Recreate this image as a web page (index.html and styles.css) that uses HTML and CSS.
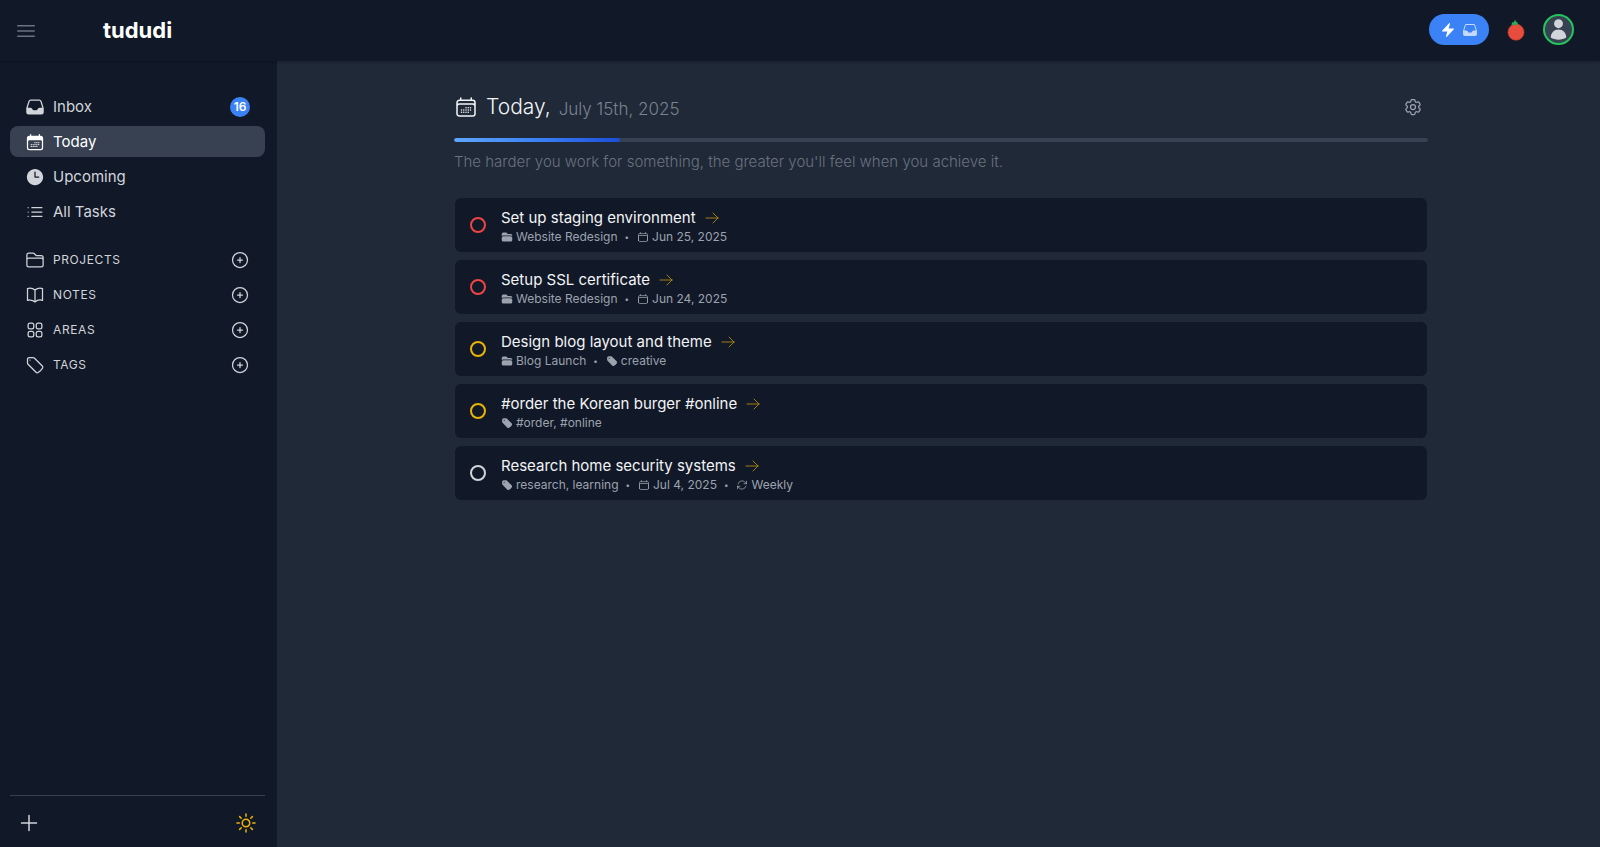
FILE: index.html
```html
<!DOCTYPE html>
<html lang="en">
<head>
    <meta charset="UTF-8">
    <meta name="viewport" content="width=device-width, initial-scale=1.0">
    <title>tududi</title>
    <link rel="stylesheet" href="styles.css">
</head>
<body>
    <!-- icon set -->
    <svg class="sprite" aria-hidden="true">
        <symbol id="i-menu" viewBox="0 0 24 24"><path d="M3.75 6.75h16.5M3.75 12h16.5m-16.5 5.25h16.5"/></symbol>
        <symbol id="i-inbox" viewBox="0 0 24 24"><path fill-rule="evenodd" d="M6.912 3a3 3 0 0 0-2.868 2.118l-2.411 7.838a3 3 0 0 0-.133.882V18a3 3 0 0 0 3 3h15a3 3 0 0 0 3-3v-4.162c0-.299-.045-.596-.133-.882l-2.412-7.838A3 3 0 0 0 17.088 3H6.912Zm13.823 9.75-2.213-7.191A1.5 1.5 0 0 0 17.088 4.5H6.912a1.5 1.5 0 0 0-1.434 1.059L3.265 12.75H6.11a3 3 0 0 1 2.684 1.658l.256.513a1.5 1.5 0 0 0 1.342.829h3.218a1.5 1.5 0 0 0 1.342-.83l.256-.512a3 3 0 0 1 2.684-1.658h2.844Z"/></symbol>
        <symbol id="i-calendar-solid" viewBox="0 0 24 24"><path d="M12.75 12.75a.75.75 0 1 1-1.5 0 .75.75 0 0 1 1.5 0ZM7.5 15.75a.75.75 0 1 0 0-1.5.75.75 0 0 0 0 1.5ZM8.25 17.25a.75.75 0 1 1-1.5 0 .75.75 0 0 1 1.5 0ZM9.75 15.75a.75.75 0 1 0 0-1.5.75.75 0 0 0 0 1.5ZM10.5 17.25a.75.75 0 1 1-1.5 0 .75.75 0 0 1 1.5 0ZM12 15.75a.75.75 0 1 0 0-1.5.75.75 0 0 0 0 1.5ZM12.75 17.25a.75.75 0 1 1-1.5 0 .75.75 0 0 1 1.5 0ZM14.25 15.75a.75.75 0 1 0 0-1.5.75.75 0 0 0 0 1.5ZM15 17.25a.75.75 0 1 1-1.5 0 .75.75 0 0 1 1.5 0ZM16.5 15.75a.75.75 0 1 0 0-1.5.75.75 0 0 0 0 1.5ZM15 12.75a.75.75 0 1 1-1.5 0 .75.75 0 0 1 1.5 0ZM16.5 13.5a.75.75 0 1 0 0-1.5.75.75 0 0 0 0 1.5Z"/><path fill-rule="evenodd" d="M6.75 2.25A.75.75 0 0 1 7.5 3v1.5h9V3A.75.75 0 0 1 18 3v1.5h.75a3 3 0 0 1 3 3v11.25a3 3 0 0 1-3 3H5.25a3 3 0 0 1-3-3V7.5a3 3 0 0 1 3-3H6V3a.75.75 0 0 1 .75-.75Zm13.5 9a1.5 1.5 0 0 0-1.5-1.5H5.25a1.5 1.5 0 0 0-1.5 1.5v7.5a1.5 1.5 0 0 0 1.5 1.5h13.5a1.5 1.5 0 0 0 1.5-1.5v-7.5Z"/></symbol>
        <symbol id="i-calendar-days" viewBox="0 0 24 24"><path d="M6.75 3v2.25M17.25 3v2.25M3 18.75V7.5a2.25 2.25 0 0 1 2.25-2.25h13.5A2.25 2.25 0 0 1 21 7.5v11.25m-18 0A2.25 2.25 0 0 0 5.25 21h13.5A2.25 2.25 0 0 0 21 18.75m-18 0v-7.5A2.25 2.25 0 0 1 5.25 9h13.5A2.25 2.25 0 0 1 21 11.25v7.5m-9-6h.008v.008H12v-.008ZM12 15h.008v.008H12V15Zm0 2.25h.008v.008H12v-.008ZM9.75 15h.008v.008H9.75V15Zm0 2.25h.008v.008H9.75v-.008ZM7.5 15h.008v.008H7.5V15Zm0 2.25h.008v.008H7.5v-.008Zm6.75-4.5h.008v.008h-.008v-.008Zm0 2.25h.008v.008h-.008V15Zm0 2.25h.008v.008h-.008v-.008Zm2.25-4.5h.008v.008H16.5v-.008Zm0 2.25h.008v.008H16.5V15Z"/></symbol>
        <symbol id="i-calendar" viewBox="0 0 24 24"><path d="M6.75 3v2.25M17.25 3v2.25M3 18.75V7.5a2.25 2.25 0 0 1 2.25-2.25h13.5A2.25 2.25 0 0 1 21 7.5v11.25m-18 0A2.25 2.25 0 0 0 5.25 21h13.5A2.25 2.25 0 0 0 21 18.75m-18 0v-7.5A2.25 2.25 0 0 1 5.25 9h13.5A2.25 2.25 0 0 1 21 11.25v7.5"/></symbol>
        <symbol id="i-clock" viewBox="0 0 24 24"><path fill-rule="evenodd" d="M12 2.25c-5.385 0-9.75 4.365-9.75 9.75s4.365 9.75 9.75 9.75 9.75-4.365 9.75-9.75S17.385 2.25 12 2.25ZM12.75 6a.75.75 0 0 0-1.5 0v6c0 .414.336.75.75.75h4.5a.75.75 0 0 0 0-1.5h-3.75V6Z"/></symbol>
        <symbol id="i-list" viewBox="0 0 24 24"><path d="M8.25 6.75h12M8.25 12h12m-12 5.25h12M3.75 6.75h.007v.008H3.75V6.75Zm0 5.25h.007v.008H3.75V12Zm0 5.25h.007v.008H3.75v-.008Z"/></symbol>
        <symbol id="i-folder" viewBox="0 0 24 24"><path d="M2.25 12.75V12A2.25 2.25 0 0 1 4.5 9.75h15A2.25 2.25 0 0 1 21.75 12v.75m-8.69-6.44-2.12-2.12a1.5 1.5 0 0 0-1.061-.44H4.5A2.25 2.25 0 0 0 2.25 6v12a2.25 2.25 0 0 0 2.25 2.25h15A2.25 2.25 0 0 0 21.75 18V9a2.25 2.25 0 0 0-2.25-2.25h-5.379a1.5 1.5 0 0 1-1.06-.44Z"/></symbol>
        <symbol id="i-folder-solid" viewBox="0 0 24 24"><path d="M19.5 21a3 3 0 0 0 3-3v-4.5a3 3 0 0 0-3-3h-15a3 3 0 0 0-3 3V18a3 3 0 0 0 3 3h15ZM1.5 10.146V6a3 3 0 0 1 3-3h5.379a2.25 2.25 0 0 1 1.59.659l2.122 2.121c.14.141.331.22.53.22H19.5a3 3 0 0 1 3 3v1.146A4.483 4.483 0 0 0 19.5 9h-15a4.483 4.483 0 0 0-3 1.146Z"/></symbol>
        <symbol id="i-book" viewBox="0 0 24 24"><path d="M12 6.042A8.967 8.967 0 0 0 6 3.75c-1.052 0-2.062.18-3 .512v14.25A8.987 8.987 0 0 1 6 18c2.305 0 4.408.867 6 2.292m0-14.25a8.966 8.966 0 0 1 6-2.292c1.052 0 2.062.18 3 .512v14.25A8.987 8.987 0 0 0 18 18a8.967 8.967 0 0 0-6 2.292m0-14.25v14.25"/></symbol>
        <symbol id="i-squares" viewBox="0 0 24 24"><rect x="3.75" y="3.75" width="6.75" height="6.75" rx="2.25"/><rect x="13.5" y="3.75" width="6.75" height="6.75" rx="2.25"/><rect x="3.75" y="13.5" width="6.75" height="6.75" rx="2.25"/><rect x="13.5" y="13.5" width="6.75" height="6.75" rx="2.25"/></symbol>
        <symbol id="i-tag" viewBox="0 0 24 24"><path d="M9.568 3H5.25A2.25 2.25 0 0 0 3 5.25v4.318c0 .597.237 1.17.659 1.591l9.581 9.581c.699.699 1.78.872 2.607.33a18.095 18.095 0 0 0 5.223-5.223c.542-.827.369-1.908-.33-2.607L11.16 3.66A2.25 2.25 0 0 0 9.568 3ZM6 6h.008v.008H6V6Z"/></symbol>
        <symbol id="i-tag-solid" viewBox="0 0 24 24"><path fill-rule="evenodd" d="M5.25 2.25a3 3 0 0 0-3 3v4.318a3 3 0 0 0 .879 2.121l9.58 9.581c.92.92 2.39 1.186 3.548.428a18.849 18.849 0 0 0 5.441-5.44c.758-1.16.492-2.629-.428-3.548l-9.58-9.581a3 3 0 0 0-2.122-.879H5.25ZM6.375 7.5a1.125 1.125 0 1 0 0-2.25 1.125 1.125 0 0 0 0 2.25Z"/></symbol>
        <symbol id="i-plus-circle" viewBox="0 0 24 24"><path d="M12 9v6m3-3H9m12 0a9 9 0 1 1-18 0 9 9 0 0 1 18 0Z"/></symbol>
        <symbol id="i-plus" viewBox="0 0 24 24"><path d="M12 4.5v15m7.5-7.5h-15"/></symbol>
        <symbol id="i-sun" viewBox="0 0 24 24"><path d="M12 3v2.25m6.364.386-1.591 1.591M21 12h-2.25m-.386 6.364-1.591-1.591M12 18.75V21m-4.773-4.227-1.591 1.591M5.25 12H3m4.227-4.773L5.636 5.636M15.75 12a3.75 3.75 0 1 1-7.5 0 3.75 3.75 0 0 1 7.5 0Z"/></symbol>
        <symbol id="i-bolt" viewBox="0 0 24 24"><path d="M14.615 1.595a.75.75 0 0 1 .359.852L12.982 9.75h7.268a.75.75 0 0 1 .548 1.262l-10.5 11.25a.75.75 0 0 1-1.272-.71l1.992-7.302H3.75a.75.75 0 0 1-.548-1.262l10.5-11.25a.75.75 0 0 1 .913-.143Z"/></symbol>
        <symbol id="i-cog" viewBox="0 0 24 24"><path d="M9.594 3.94c.09-.542.56-.94 1.11-.94h2.593c.55 0 1.02.398 1.11.94l.213 1.281c.063.374.313.686.645.87.074.04.147.083.22.127.325.196.72.257 1.075.124l1.217-.456a1.125 1.125 0 0 1 1.37.49l1.296 2.247a1.125 1.125 0 0 1-.26 1.431l-1.003.827c-.293.241-.438.613-.43.992a7.723 7.723 0 0 1 0 .255c-.008.378.137.75.43.991l1.004.827c.424.35.534.955.26 1.43l-1.298 2.247a1.125 1.125 0 0 1-1.369.491l-1.217-.456c-.355-.133-.75-.072-1.076.124a6.47 6.47 0 0 1-.22.128c-.331.183-.581.495-.644.869l-.213 1.281c-.09.543-.56.94-1.11.94h-2.594c-.55 0-1.019-.398-1.11-.94l-.213-1.281c-.062-.374-.312-.686-.644-.87a6.52 6.52 0 0 1-.22-.127c-.325-.196-.72-.257-1.076-.124l-1.217.456a1.125 1.125 0 0 1-1.369-.49l-1.297-2.247a1.125 1.125 0 0 1 .26-1.431l1.004-.827c.292-.24.437-.613.43-.991a6.932 6.932 0 0 1 0-.255c.007-.38-.138-.751-.43-.992l-1.004-.827a1.125 1.125 0 0 1-.26-1.43l1.297-2.247a1.125 1.125 0 0 1 1.37-.491l1.216.456c.356.133.751.072 1.076-.124.072-.044.146-.086.22-.128.332-.183.582-.495.644-.869l.214-1.28Z"/><circle cx="12" cy="12" r="3"/></symbol>
        <symbol id="i-arrow" viewBox="0 0 24 24"><path d="M13.5 4.5 21 12m0 0-7.5 7.5M21 12H3"/></symbol>
        <symbol id="i-repeat" viewBox="0 0 24 24"><path d="M16.023 9.348h4.992v-.001M2.985 19.644v-4.992m0 0h4.992m-4.993 0 3.181 3.183a8.25 8.25 0 0 0 13.803-3.7M4.031 9.865a8.25 8.25 0 0 1 13.803-3.7l3.181 3.182m0-4.991v4.99"/></symbol>
    </svg>

    <header class="topbar">
        <button class="icon-btn menu-btn" aria-label="Collapse sidebar"><svg class="line lg"><use href="#i-menu"/></svg></button>
        <a class="logo" href="#">tududi</a>
        <div class="topbar-actions">
            <button class="quick-btn" aria-label="Quick capture">
                <svg class="solid sm"><use href="#i-bolt"/></svg>
                <svg class="solid sm faded"><use href="#i-inbox"/></svg>
            </button>
            <button class="icon-btn" aria-label="Pomodoro timer">
                <svg class="tomato" viewBox="0 0 20 22">
                    <circle cx="10" cy="13" r="7.4" fill="#e74c3c" stroke="#c0392b" stroke-width="0.6"/>
                    <path fill="#27ae60" d="M5.8 6.8 6.400 3.800 8 4.200 9 1.600 10.400 3.600 11.600 4.200 11.400 7 9.800 5.800 8.800 7 7.600 6Z"/>
                </svg>
            </button>
            <button class="avatar" aria-label="Profile">
                <svg viewBox="0 0 28 28"><circle cx="14" cy="8" r="4.6"/><path d="M6 22.400C6 17.400 9.400 14 14 14s8 3.400 8 8.400C19.800 23.900 17 24.600 14 24.600S8.200 23.900 6 22.400Z"/></svg>
            </button>
        </div>
    </header>

    <div class="layout">
        <aside class="sidebar">
            <nav class="menu">
                <a class="menu-item" href="#"><svg class="solid"><use href="#i-inbox"/></svg>Inbox<span class="badge">16</span></a>
                <a class="menu-item active" href="#"><svg class="solid"><use href="#i-calendar-solid"/></svg>Today</a>
                <a class="menu-item" href="#"><svg class="solid"><use href="#i-clock"/></svg>Upcoming</a>
                <a class="menu-item" href="#"><svg class="line"><use href="#i-list"/></svg>All Tasks</a>
            </nav>
            <nav class="menu">
                <div class="menu-item section">
                    <a href="#"><svg class="line"><use href="#i-folder"/></svg>PROJECTS</a>
                    <button class="icon-btn" aria-label="Add project"><svg class="line"><use href="#i-plus-circle"/></svg></button>
                </div>
                <div class="menu-item section">
                    <a href="#"><svg class="line"><use href="#i-book"/></svg>NOTES</a>
                    <button class="icon-btn" aria-label="Add note"><svg class="line"><use href="#i-plus-circle"/></svg></button>
                </div>
                <div class="menu-item section">
                    <a href="#"><svg class="line"><use href="#i-squares"/></svg>AREAS</a>
                    <button class="icon-btn" aria-label="Add area"><svg class="line"><use href="#i-plus-circle"/></svg></button>
                </div>
                <div class="menu-item section">
                    <a href="#"><svg class="line"><use href="#i-tag"/></svg>TAGS</a>
                    <button class="icon-btn" aria-label="Add tag"><svg class="line"><use href="#i-plus-circle"/></svg></button>
                </div>
            </nav>
            <div class="sidebar-footer">
                <button class="icon-btn" aria-label="Create new"><svg class="line lg"><use href="#i-plus"/></svg></button>
                <button class="icon-btn sun" aria-label="Toggle dark mode"><svg class="line lg"><use href="#i-sun"/></svg></button>
            </div>
        </aside>

        <main class="content">
            <div class="page">
                <div class="page-head">
                    <svg class="line lg"><use href="#i-calendar-days"/></svg>
                    <h2>Today,</h2>
                    <span class="date">July 15th, 2025</span>
                    <button class="icon-btn settings" aria-label="Settings"><svg class="line"><use href="#i-cog"/></svg></button>
                </div>
                <div class="progress"><div class="progress-fill" style="width: 17%"></div></div>
                <p class="quote">The harder you work for something, the greater you'll feel when you achieve it.</p>

                <ul class="tasks">
                    <li class="task">
                        <input type="checkbox" class="high" id="task1">
                        <div class="task-body">
                            <div class="task-title"><label for="task1">Set up staging environment</label><button class="icon-btn arrow" aria-label="Start task"><svg class="line"><use href="#i-arrow"/></svg></button></div>
                            <div class="meta">
                                <span><svg class="solid"><use href="#i-folder-solid"/></svg>Website Redesign</span>
                                <span><svg class="line"><use href="#i-calendar"/></svg>Jun 25, 2025</span>
                            </div>
                        </div>
                    </li>
                    <li class="task">
                        <input type="checkbox" class="high" id="task2">
                        <div class="task-body">
                            <div class="task-title"><label for="task2">Setup SSL certificate</label><button class="icon-btn arrow" aria-label="Start task"><svg class="line"><use href="#i-arrow"/></svg></button></div>
                            <div class="meta">
                                <span><svg class="solid"><use href="#i-folder-solid"/></svg>Website Redesign</span>
                                <span><svg class="line"><use href="#i-calendar"/></svg>Jun 24, 2025</span>
                            </div>
                        </div>
                    </li>
                    <li class="task">
                        <input type="checkbox" class="medium" id="task3">
                        <div class="task-body">
                            <div class="task-title"><label for="task3">Design blog layout and theme</label><button class="icon-btn arrow" aria-label="Start task"><svg class="line"><use href="#i-arrow"/></svg></button></div>
                            <div class="meta">
                                <span><svg class="solid"><use href="#i-folder-solid"/></svg>Blog Launch</span>
                                <span><svg class="solid"><use href="#i-tag-solid"/></svg>creative</span>
                            </div>
                        </div>
                    </li>
                    <li class="task">
                        <input type="checkbox" class="medium" id="task4">
                        <div class="task-body">
                            <div class="task-title"><label for="task4">#order the Korean burger #online</label><button class="icon-btn arrow" aria-label="Start task"><svg class="line"><use href="#i-arrow"/></svg></button></div>
                            <div class="meta">
                                <span><svg class="solid"><use href="#i-tag-solid"/></svg>#order, #online</span>
                            </div>
                        </div>
                    </li>
                    <li class="task">
                        <input type="checkbox" id="task5">
                        <div class="task-body">
                            <div class="task-title"><label for="task5">Research home security systems</label><button class="icon-btn arrow" aria-label="Start task"><svg class="line"><use href="#i-arrow"/></svg></button></div>
                            <div class="meta">
                                <span><svg class="solid"><use href="#i-tag-solid"/></svg>research, learning</span>
                                <span><svg class="line"><use href="#i-calendar"/></svg>Jul 4, 2025</span>
                                <span><svg class="line"><use href="#i-repeat"/></svg>Weekly</span>
                            </div>
                        </div>
                    </li>
                </ul>
            </div>
        </main>
    </div>
</body>
</html>
```
FILE: styles.css
```css
* {
    box-sizing: border-box;
}
body {
    margin: 0;
    min-height: 100vh;
    display: flex;
    flex-direction: column;
    font-family: Inter, "Liberation Sans", sans-serif;
    font-size: 15px;
    line-height: 20px;
    color: #d1d5db;
    background: #1f2937;
}
a {
    color: inherit;
    text-decoration: none;
}
svg {
    display: block;
    flex-shrink: 0;
    width: 20px;
    height: 20px;
}
.sprite {
    position: absolute;
    width: 0;
    height: 0;
}
.line {
    fill: none;
    stroke: currentColor;
    stroke-width: 1.5;
    stroke-linecap: round;
    stroke-linejoin: round;
}
.solid {
    fill: currentColor;
}
.sm {
    width: 16px;
    height: 16px;
}
.lg {
    width: 24px;
    height: 24px;
}
.icon-btn {
    padding: 0;
    border: 0;
    background: none;
    color: inherit;
    cursor: pointer;
}

/* top bar */
.topbar {
    display: flex;
    align-items: center;
    height: 61px;
    padding: 0 26px 2px 14px;
    background: #111827;
    box-shadow: 0 1px 3px rgba(0, 0, 0, 0.2);
    z-index: 1;
}
.menu-btn {
    padding-top: 3px;
    color: #6b7280;
}
.logo {
    margin-left: 65px;
    font-size: 22px;
    font-weight: 700;
    color: #fff;
}
.topbar-actions {
    display: flex;
    align-items: center;
    gap: 16px;
    margin-left: auto;
}
.quick-btn {
    display: flex;
    align-items: center;
    justify-content: center;
    gap: 6px;
    width: 60px;
    height: 31px;
    padding: 0;
    border: 0;
    border-radius: 16px;
    background: #3b82f6;
    color: #fff;
}
.faded {
    opacity: 0.7;
}
.tomato {
    width: 22px;
    height: 24px;
}
.avatar {
    width: 31px;
    height: 31px;
    padding: 0;
    border: 2px solid #22c55e;
    border-radius: 50%;
    background: #374151;
}
.avatar svg {
    width: 100%;
    height: 100%;
    fill: #d1d5db;
}

.layout {
    flex: 1;
    display: flex;
}

/* sidebar */
.sidebar {
    display: flex;
    flex-direction: column;
    gap: 17px;
    width: 277px;
    padding: 30px 12px 0 10px;
    background: #111827;
}
.menu {
    display: flex;
    flex-direction: column;
    gap: 4px;
}
.menu-item {
    display: flex;
    align-items: center;
    gap: 8px;
    height: 31px;
    padding: 0 15px;
    border-radius: 8px;
}
.menu-item.active {
    background: #374151;
    color: #fff;
}
.badge {
    width: 20px;
    margin-left: auto;
    border-radius: 10px;
    background: #3b82f6;
    color: #fff;
    font-size: 12px;
    font-weight: 600;
    text-align: center;
}
.section {
    justify-content: space-between;
    font-size: 12px;
    letter-spacing: 0.05em;
}
.section a {
    display: flex;
    align-items: center;
    gap: 8px;
}
.sidebar-footer {
    display: flex;
    justify-content: space-between;
    margin-top: auto;
    padding: 15px 7px 12px;
    border-top: 1px solid #374151;
}
.sun {
    color: #eab308;
}

/* main */
.content {
    flex: 1;
    padding: 33px 19px 33px 24px;
}
.page {
    max-width: 974px;
    margin: 0 auto;
}
.page-head {
    display: flex;
    align-items: center;
    gap: 8px;
    height: 26px;
    color: #f3f4f6;
}
.page-head h2 {
    margin: 0;
    font-size: 21px;
    font-weight: 300;
}
.date {
    padding-top: 4px;
    font-size: 17px;
    font-weight: 300;
    color: #7b8391;
}
.settings {
    margin: 0 5px 0 auto;
    color: #9ca3af;
}
.progress {
    height: 4px;
    margin-top: 18px;
    border-radius: 2px;
    background: #374151;
    overflow: hidden;
}
.progress-fill {
    height: 100%;
    border-radius: 2px;
    background: linear-gradient(to right, #60a5fa, #3b82f6, #1d4ed8);
}
.quote {
    margin: 10px 0 26px;
    font-weight: 300;
    color: #6b7280;
}
.tasks {
    display: flex;
    flex-direction: column;
    gap: 8px;
    margin: 0;
    padding: 0 1px;
    list-style: none;
}
.task {
    display: flex;
    align-items: center;
    gap: 15px;
    height: 54px;
    padding: 0 15px;
    border-radius: 6px;
    background: #111827;
}
.task input {
    appearance: none;
    width: 16px;
    height: 16px;
    margin: 0;
    border: 2px solid #d1d5db;
    border-radius: 50%;
}
.task .high {
    border-color: #ef4444;
}
.task .medium {
    border-color: #eab308;
}
.task-body {
    padding-top: 3px;
}
.task-title {
    display: flex;
    align-items: center;
    gap: 8px;
    color: #f3f4f6;
}
.arrow {
    color: #a37c14;
}
.arrow svg {
    width: 16px;
    height: 16px;
}
.meta {
    display: flex;
    line-height: 18px;
    font-size: 12px;
    color: #9ca3af;
}
.meta span {
    display: flex;
    align-items: center;
    gap: 3px;
}
.meta svg {
    width: 12px;
    height: 12px;
}
.meta span + span::before {
    content: "•";
    margin: 0 5px 0 7px;
    font-size: 8px;
}
```
